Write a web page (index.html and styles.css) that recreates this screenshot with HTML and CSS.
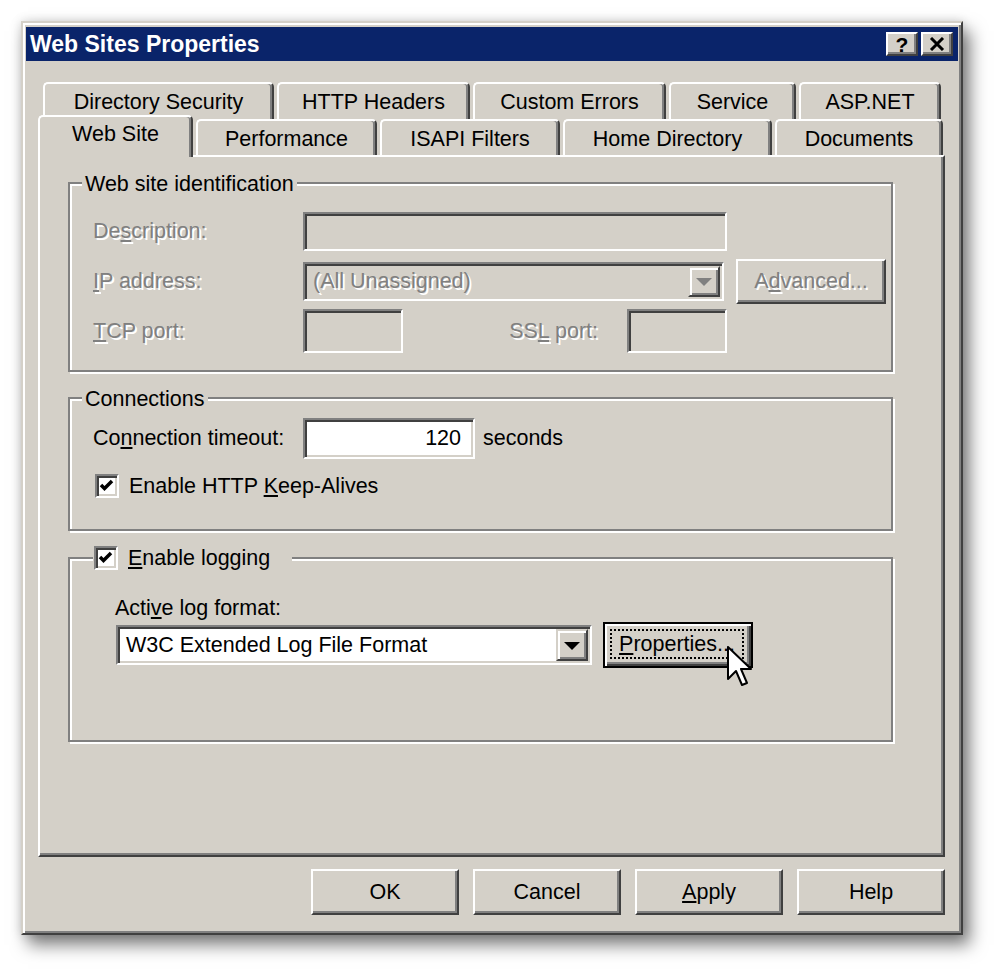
FILE: index.html
```html
<!DOCTYPE html>
<html lang="en">
<head>
    <meta charset="UTF-8">
    <title>Web Sites Properties</title>
    <link rel="stylesheet" href="styles.css">
</head>
<body>
    <div class="window">
        <div class="titlebar">
            <span class="title">Web Sites Properties</span>
            <div class="caption-buttons">
                <span class="caption-btn">?</span>
                <span class="caption-btn">
                    <svg width="16" height="14" viewBox="0 0 16 14"><path d="M2 1 L14 13 M14 1 L2 13" stroke="#000" stroke-width="3"/></svg>
                </span>
            </div>
        </div>

        <div class="content">
            <!-- tab strip -->
            <div class="tab-row back">
                <div class="tab t-dirsec">Directory Security</div>
                <div class="tab t-http">HTTP Headers</div>
                <div class="tab t-errors">Custom Errors</div>
                <div class="tab t-service">Service</div>
                <div class="tab t-asp">ASP.NET</div>
            </div>
            <div class="tab-row front">
                <div class="tab selected t-site">Web Site</div>
                <div class="tab t-perf">Performance</div>
                <div class="tab t-isapi">ISAPI Filters</div>
                <div class="tab t-home">Home Directory</div>
                <div class="tab t-docs">Documents</div>
            </div>

            <div class="panel">
                <div class="group group-id">
                    <div class="group-title">Web site identification</div>
                    <div class="field-row row-desc">
                        <span class="label disabled">De<u>s</u>cription:</span>
                        <span class="textbox off desc-box"></span>
                    </div>
                    <div class="field-row row-ip">
                        <span class="label disabled"><u>I</u>P address:</span>
                        <span class="combo off ip-combo">
                            <span class="combo-text disabled">(All Unassigned)</span>
                            <span class="drop-btn"><span class="arrow grey"></span></span>
                        </span>
                        <span class="button adv-btn disabled">A<u>d</u>vanced...</span>
                    </div>
                    <div class="field-row row-port">
                        <span class="label disabled"><u>T</u>CP port:</span>
                        <span class="textbox off port-box"></span>
                        <span class="ssl-label disabled">SS<u>L</u> port:</span>
                        <span class="textbox off port-box"></span>
                    </div>
                </div>

                <div class="group group-conn">
                    <div class="group-title">Connections</div>
                    <div class="field-row row-timeout">
                        <span class="label">Co<u>n</u>nection timeout:</span>
                        <span class="textbox timeout-box">120</span>
                        <span class="unit">seconds</span>
                    </div>
                    <div class="field-row row-check">
                        <span class="checkbox">
                            <svg width="20" height="20" viewBox="0 0 20 20"><polyline points="4,9 7.5,12.5 15,5" fill="none" stroke="#000" stroke-width="3.5"/></svg>
                        </span>
                        <span class="check-label">Enable HTTP <u>K</u>eep-Alives</span>
                    </div>
                </div>

                <div class="group group-log">
                    <div class="group-title log-title">
                        <span class="checkbox">
                            <svg width="20" height="20" viewBox="0 0 20 20"><polyline points="4,9 7.5,12.5 15,5" fill="none" stroke="#000" stroke-width="3.5"/></svg>
                        </span>
                        <span class="check-label"><u>E</u>nable logging</span>
                    </div>
                    <div class="log-label">Acti<u>v</u>e log format:</div>
                    <div class="field-row row-format">
                        <span class="combo format-combo">
                            <span class="combo-text">W3C Extended Log File Format</span>
                            <span class="drop-btn"><span class="arrow"></span></span>
                        </span>
                        <span class="prop-wrap">
                            <span class="button default-btn"><span class="focus"><u>P</u>roperties...</span></span>
                            <svg class="cursor" width="26" height="42" viewBox="0 0 26 42"><path d="M1 1 L1 33 L9 25 L15 39 L20 37 L14 23 L24 23 Z" fill="#fff" stroke="#000" stroke-width="2" stroke-linejoin="round"/></svg>
                        </span>
                    </div>
                </div>
            </div>

            <div class="dialog-buttons">
                <span class="button">OK</span>
                <span class="button">Cancel</span>
                <span class="button"><u>A</u>pply</span>
                <span class="button">Help</span>
            </div>
        </div>
    </div>
</body>
</html>
```

FILE: styles.css
```css
* {
    box-sizing: border-box;
}

html, body {
    min-height: 100%;
}

body {
    margin: 0;
    min-height: 972px;
    padding: 21px 0 0 21px;
    background: #fff;
    font-family: "Liberation Sans", Arial, sans-serif;
    font-size: 21.5px;
    color: #000;
}

u {
    text-underline-offset: 2px;
}

.window {
    width: 942px;
    height: 914px;
    padding: 4px 3px;
    background: #d4d0c8;
    border: 2px solid;
    border-color: #d4d0c8 #404040 #404040 #d4d0c8;
    box-shadow: inset 2px 2px #fff, inset -2px -2px #808080, 7px 10px 16px rgba(0, 0, 0, 0.5), 0 0 10px rgba(0, 0, 0, 0.15);
}

.titlebar {
    height: 34px;
    background: #0a246a;
    display: flex;
    align-items: center;
    justify-content: space-between;
    padding: 0 5px 0 4px;
}

.title {
    color: #fff;
    font-weight: bold;
    font-size: 23px;
}

.caption-buttons {
    display: flex;
    gap: 3px;
}

.caption-btn {
    width: 32px;
    height: 24px;
    background: #d4d0c8;
    border: 2px solid;
    border-color: #fff #404040 #404040 #fff;
    box-shadow: inset -2px -2px #808080;
    display: flex;
    align-items: center;
    justify-content: center;
    font-weight: bold;
    font-size: 21px;
    line-height: 1;
}

.content {
    padding: 21px 0 0 12px;
}

/* tabs */
.tab-row {
    display: flex;
    gap: 3px;
}

.tab-row.back {
    height: 37px;
    margin-left: 5px;
}

.tab-row.front {
    height: 36px;
    align-items: flex-start;
}

.tab {
    height: 37px;
    display: flex;
    align-items: center;
    justify-content: center;
    padding-top: 2px;
    background: #d4d0c8;
    border-top: 2px solid #fff;
    border-left: 2px solid #fff;
    border-right: 2px solid #404040;
    border-radius: 5px 5px 0 0;
    box-shadow: inset -2px 0 #808080;
}

.front .tab {
    height: 36px;
}

.front .tab.selected {
    height: 42px;
    margin-top: -4px;
    margin-bottom: -2px;
    padding: 0 0 6px;
    position: relative;
    z-index: 2;
}

.t-dirsec { width: 231px; }
.t-http { width: 193px; }
.t-errors { width: 193px; }
.t-service { width: 127px; }
.t-asp { width: 142px; }
.t-site { width: 155px; }
.t-perf { width: 181px; }
.t-isapi { width: 180px; }
.t-home { width: 209px; }
.t-docs { width: 168px; }

.panel {
    width: 907px;
    height: 702px;
    border: 2px solid;
    border-color: #fff #404040 #404040 #fff;
    box-shadow: inset -2px -2px #808080;
    padding: 25px 50px 0 28px;
}

/* group boxes */
.group {
    border: 2px solid #808080;
    box-shadow: inset 2px 2px #fff, 2px 2px #fff;
    padding-left: 23px;
}

.group-title {
    display: table;
    margin: -12px 0 0 -11px;
    padding: 0 3px;
    line-height: 24px;
    background: #d4d0c8;
}

.group-id {
    height: 190px;
}

.group-conn {
    height: 134px;
    margin-top: 25px;
}

.group-log {
    height: 185px;
    margin-top: 26px;
    padding-left: 45px;
}

.field-row {
    display: flex;
    align-items: center;
}

.label {
    width: 210px;
    flex-shrink: 0;
}

.disabled {
    color: #808080;
    text-shadow: 2px 2px 0 #fff;
}

.row-desc {
    margin-top: 15px;
    height: 40px;
}

.row-ip {
    margin-top: 7px;
    height: 46px;
}

.row-port {
    margin-top: 5px;
    height: 44px;
}

.textbox {
    height: 40px;
    display: flex;
    align-items: center;
    background: #fff;
    border: 2px solid;
    border-color: #808080 #fff #fff #808080;
    box-shadow: inset 2px 2px #404040, inset -2px -2px #d4d0c8;
}

.textbox.off {
    background: #d4d0c8;
}

.desc-box {
    width: 424px;
    height: 39px;
}

.port-box {
    width: 100px;
    height: 44px;
}

.ssl-label {
    width: 195px;
    margin-right: 29px;
    text-align: right;
}

.combo {
    display: flex;
    align-items: center;
    justify-content: space-between;
    height: 40px;
    background: #fff;
    border: 2px solid;
    border-color: #808080 #fff #fff #808080;
    box-shadow: inset 2px 2px #404040, inset -2px -2px #d4d0c8;
    padding: 2px 2px 2px 6px;
}

.combo.off {
    background: #d4d0c8;
}

.ip-combo {
    width: 421px;
    height: 39px;
}

.combo-text {
    padding-left: 2px;
}

.drop-btn {
    width: 32px;
    height: 100%;
    display: flex;
    align-items: center;
    justify-content: center;
    background: #d4d0c8;
    border: 2px solid;
    border-color: #d4d0c8 #404040 #404040 #d4d0c8;
    box-shadow: inset 2px 2px #fff, inset -2px -2px #808080;
}

.arrow {
    width: 0;
    height: 0;
    border-left: 8px solid transparent;
    border-right: 8px solid transparent;
    border-top: 8px solid #000;
    margin-top: 2px;
}

.arrow.grey {
    border-top-color: #808080;
}

.button {
    width: 148px;
    height: 46px;
    display: flex;
    align-items: center;
    justify-content: center;
    background: #d4d0c8;
    border: 2px solid;
    border-color: #fff #404040 #404040 #fff;
    box-shadow: inset -2px -2px #808080;
}

.adv-btn {
    width: 150px;
    height: 45px;
    margin-left: 12px;
}

.timeout-box {
    width: 172px;
    height: 41px;
    justify-content: flex-end;
    padding-right: 12px;
}

.row-timeout {
    margin-top: 7px;
    height: 41px;
}

.unit {
    margin-left: 8px;
}

.row-check {
    margin-top: 13px;
    height: 28px;
    padding-left: 2px;
}

.checkbox {
    width: 24px;
    height: 24px;
    flex-shrink: 0;
    display: flex;
    align-items: center;
    justify-content: center;
    background: #fff;
    border: 2px solid;
    border-color: #808080 #fff #fff #808080;
    box-shadow: inset 2px 2px #404040, inset -2px -2px #d4d0c8;
}

.check-label {
    margin-left: 10px;
}

.log-title {
    display: flex;
    width: max-content;
    align-items: center;
    height: 28px;
    margin: -15px 0 0 -22px;
    padding: 0 22px 0 1px;
}

.log-label {
    margin-top: 24px;
    line-height: 24px;
}

.row-format {
    margin-top: 2px;
    height: 46px;
}

.format-combo {
    width: 476px;
    margin-left: 1px;
}

.prop-wrap {
    position: relative;
    margin-left: 11px;
}

.default-btn {
    width: 150px;
    border: 2px solid #000;
    box-shadow: inset 2px 2px #fff, inset -2px -2px #404040, inset -4px -4px #808080;
    padding: 5px 7px 7px 5px;
}

.focus {
    flex: 1;
    height: 100%;
    display: flex;
    align-items: center;
    justify-content: center;
    border: 2px dotted #000;
}

.cursor {
    position: absolute;
    left: 124px;
    top: 24px;
}

.dialog-buttons {
    width: 907px;
    display: flex;
    justify-content: flex-end;
    gap: 14px;
    margin-top: 12px;
}
```
